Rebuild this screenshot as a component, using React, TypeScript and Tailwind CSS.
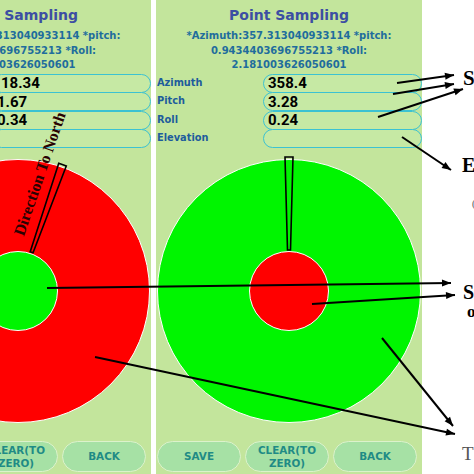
import React from 'react';

const UI_FONT = { fontFamily: 'Roboto, "Open Sans", sans-serif' };
const WIDE = { fontFamily: '"DejaVu Sans", Verdana, sans-serif' };
const SERIF = { fontFamily: '"Liberation Serif", "DejaVu Serif", serif' };

interface PanelProps {
  outer: string;
  inner: string;
  values: string[];
  firstIndent?: number;
}

const rowLabels = ['Azimuth', 'Pitch', 'Roll', 'Elevation'];

function Panel({ outer, inner, values, firstIndent = 0 }: PanelProps) {
  return (
    <div className="w-[266px] h-[474px] shrink-0 bg-[#c3e59c] flex flex-col" style={WIDE}>
      <div className="pt-[4px] text-center text-[14px] leading-[22px] font-bold text-[#3c4ea3]">
        Point Sampling
      </div>
      <div className="mt-[3px] text-center text-[10px] leading-[14.5px] font-bold text-[#1f6d9d]">
        <div>*Azimuth:357.313040933114 *pitch:</div>
        <div>0.9434403696755213 *Roll:</div>
        <div>2.181003626050601</div>
      </div>

      {/* sensor readings */}
      <div className="mt-[1.5px] flex flex-col">
        {rowLabels.map((label, i) => (
          <div key={label} className="flex items-center h-[18.5px]">
            <div className="w-[107px] pl-[1px] text-[9.8px] font-bold text-[#1d5c9c]">{label}</div>
            <div
              className="w-[159px] h-[19px] flex items-center pl-[4px] rounded-full border-[1.5px] border-[#3cc2d2] bg-[#c6e9a4] text-[15px] font-bold text-black"
              style={UI_FONT}
            >
              <span style={{ marginLeft: i === 0 ? firstIndent : 0 }}>{values[i] ?? ''}</span>
            </div>
          </div>
        ))}
      </div>

      {/* target circle */}
      <div
        className="mt-[11px] mx-auto w-[264px] h-[264px] rounded-full border border-white flex items-center justify-center"
        style={{ backgroundColor: outer }}
      >
        <div
          className="w-[80px] h-[80px] rounded-full border-[1.5px] border-white"
          style={{ backgroundColor: inner }}
        />
      </div>

      <div className="mt-[18px] px-[1px] flex gap-[4px] h-[31px]">
        {['SAVE', 'CLEAR(TO ZERO)', 'BACK'].map((b) => (
          <div
            key={b}
            className="w-[84px] h-full rounded-full bg-[#a6e1a5] border-[1.5px] border-[#dcf2cb] flex items-center justify-center text-center px-[8px] text-[10.4px] leading-[13px] font-bold text-[#1f8b85]"
          >
            {b}
          </div>
        ))}
      </div>
    </div>
  );
}

type Arrow = [number, number, number, number];

const arrows: Arrow[] = [
  [397, 83, 454, 75],
  [393, 94, 454, 84],
  [378, 117, 463, 89],
  [402, 137, 451, 170],
  [47, 288, 451, 283],
  [312, 304, 455, 295],
  [95, 357, 455, 434],
  [382, 338, 453, 426],
];

function head([x1, y1, x2, y2]: Arrow) {
  const a = Math.atan2(y2 - y1, x2 - x1);
  const len = 9;
  const w = 3.5;
  const bx = x2 - len * Math.cos(a);
  const by = y2 - len * Math.sin(a);
  const px = -Math.sin(a) * w;
  const py = Math.cos(a) * w;
  return `${x2},${y2} ${bx + px},${by + py} ${bx - px},${by - py}`;
}

export default function App() {
  return (
    <div className="relative w-[474px] h-[474px] overflow-hidden bg-white flex">
      <div className="w-[151px] shrink-0 overflow-hidden">
        <div className="-ml-[115px]">
          <Panel outer="#ff0000" inner="#00f500" values={['18.34', '1.67', '0.34']} firstIndent={4} />
        </div>
      </div>
      <div className="w-[5px] shrink-0 bg-white" />
      <Panel outer="#00f500" inner="#ff0000" values={['358.4', '3.28', '0.24']} />
      <div className="flex-1 bg-white" />

      {/* annotation overlay */}
      <svg className="absolute inset-0 pointer-events-none" width="474" height="474" viewBox="0 0 474 474">
        <polygon points="285,157 293,157 290.5,250 287.5,250" fill="none" stroke="#000" strokeWidth="1.6" />
        <polygon
          points="14,157 22,157 19.5,250 16.5,250"
          fill="none"
          stroke="#000"
          strokeWidth="1.6"
          transform="rotate(19.4 18 291)"
        />
        {arrows.map((ar, i) => (
          <g key={i}>
            <line x1={ar[0]} y1={ar[1]} x2={ar[2]} y2={ar[3]} stroke="#000" strokeWidth="2" />
            <polygon points={head(ar)} fill="#000" />
          </g>
        ))}
      </svg>

      <span
        className="absolute left-[40px] top-[174px] -translate-x-1/2 -translate-y-1/2 -rotate-[71deg] whitespace-nowrap text-[16px] leading-none font-bold text-[#2a0202]"
        style={SERIF}
      >
        Direction To North
      </span>

      <span className="absolute left-[463px] top-[68px] text-[21px] leading-none font-bold text-black" style={SERIF}>S</span>
      <span className="absolute left-[462px] top-[155px] text-[20px] leading-none font-bold text-black" style={SERIF}>E</span>
      <span className="absolute left-[472px] top-[199px] text-[10px] leading-none text-[#555]" style={SERIF}>(</span>
      <span className="absolute left-[463px] top-[282px] text-[20px] leading-none font-bold text-black" style={SERIF}>S</span>
      <span className="absolute left-[467px] top-[303px] text-[17px] leading-none font-bold text-black" style={SERIF}>o</span>
      <span className="absolute left-[462px] top-[444px] text-[19px] leading-none text-[#555]" style={SERIF}>T</span>
    </div>
  );
}
